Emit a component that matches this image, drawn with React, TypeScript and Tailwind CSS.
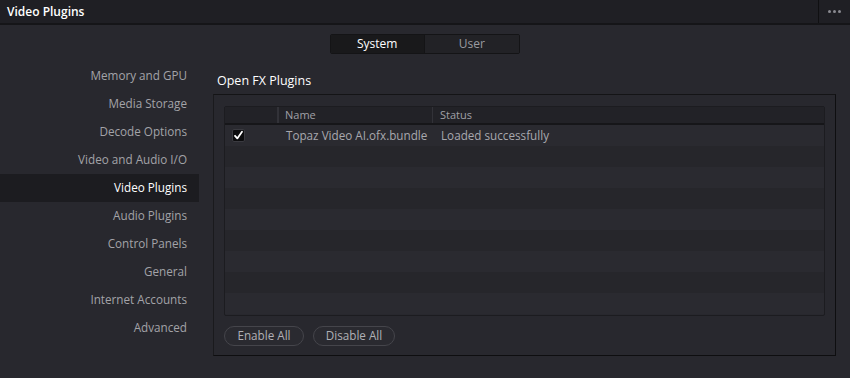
import React from 'react';

const sections = [
  'Memory and GPU',
  'Media Storage',
  'Decode Options',
  'Video and Audio I/O',
  'Video Plugins',
  'Audio Plugins',
  'Control Panels',
  'General',
  'Internet Accounts',
  'Advanced',
];

const plugins = [{name: 'Topaz Video AI.ofx.bundle', status: 'Loaded successfully', enabled: true}];

const CheckBox: React.FC<{checked: boolean}> = ({checked}) => (
  <div className="w-[13px] h-[13px] bg-[#0c0c0e] border border-[#3a3a40] rounded-[2px] flex items-center justify-center">
    {checked && (
      <svg width="11" height="11" viewBox="0 0 11 11">
        <path d="M2 5.8 L4.3 8.4 L9 1.8" fill="none" stroke="#fff" strokeWidth="1.8" strokeLinecap="round" strokeLinejoin="round" />
      </svg>
    )}
  </div>
);

export default function App() {
  const emptyRows = Array.from({length: 8});
  return (
    <div className="w-[850px] h-[378px] bg-[#28282e] flex flex-col overflow-hidden" style={{fontFamily: '"Open Sans", "Noto Sans", sans-serif'}}>
      {/* title bar */}
      <div className="h-[25px] flex-shrink-0 bg-[#1f1f24] border-b-2 border-[#151518] flex items-stretch">
        <div className="flex-1 flex items-center pl-[7px] text-[12px] font-semibold text-white">Video Plugins</div>
        <div className="w-[32px] border-l border-[#101012] flex items-center justify-center gap-[2px]">
          <span className="w-[3px] h-[3px] rounded-full bg-[#8a8a90]" />
          <span className="w-[3px] h-[3px] rounded-full bg-[#8a8a90]" />
          <span className="w-[3px] h-[3px] rounded-full bg-[#8a8a90]" />
        </div>
      </div>

      {/* tabs */}
      <div className="flex justify-center pt-[9px] pr-[1px]">
        <div className="flex w-[190px] h-[20px] border border-[#141416] rounded-[2px] overflow-hidden text-[12px]">
          <div className="flex-1 bg-[#19191b] text-white flex items-center justify-center">System</div>
          <div className="flex-1 bg-[#222226] text-[#9a9aa0] flex items-center justify-center border-l border-[#141416]">User</div>
        </div>
      </div>

      <div className="flex flex-1 pt-[8px]">
        {/* sidebar */}
        <div className="w-[199px] flex flex-col">
          {sections.map((s) => (
            <div
              key={s}
              className={`h-[28px] flex items-center justify-end pr-[12px] text-[11.7px] ${
                s === 'Video Plugins' ? 'bg-[#1c1c20] text-white' : 'text-[#a3a3a8]'
              }`}>
              {s}
            </div>
          ))}
        </div>

        {/* main */}
        <div className="flex-1 pl-[14px] pt-[7px] flex flex-col">
          <div className="h-[25px] flex items-center pl-[4px] text-[12.5px] text-white">Open FX Plugins</div>
          <div className="w-[623px] h-[262px] border border-[#0e0e10] border-l-[#1a1a1d] border-t-[#141416] bg-[#28282e] px-[10px] pt-[11px] flex flex-col">
            <div className="h-[210px] bg-[#28282e] border border-[#1c1c20] rounded-[2px] flex flex-col overflow-hidden">
              <div className="h-[18px] flex-shrink-0 bg-[#222227] border-b-2 border-[#161619] flex text-[11px] text-[#a0a0a6]">
                <div className="w-[54px] border-r-2 border-[#323238]" />
                <div className="w-[154px] border-r border-[#323238] pl-[6px] flex items-center">Name</div>
                <div className="flex-1 pl-[7px] flex items-center">Status</div>
              </div>
              {plugins.map((p) => (
                <div key={p.name} className="h-[21px] flex-shrink-0 bg-[#2a2a30] flex items-center text-[11.7px] text-[#a8a8ae]">
                  <div className="w-[54px] pl-[7px] flex items-center">
                    <CheckBox checked={p.enabled} />
                  </div>
                  <div className="w-[155px] pl-[7px] whitespace-nowrap">{p.name}</div>
                  <div className="flex-1 pl-[7px]">{p.status}</div>
                </div>
              ))}
              {emptyRows.map((_, i) => (
                <div key={i} className={`h-[21px] flex-shrink-0 ${i % 2 === 0 ? 'bg-[#26262b]' : 'bg-[#2a2a30]'}`} />
              ))}
            </div>
            <div className="flex gap-[9px] mt-[10px]">
              <button className="h-[20px] w-[80px] rounded-full border border-[#45454b] bg-[#2a2a30] text-[11.7px] text-[#b0b0b6] flex items-center justify-center">
                Enable All
              </button>
              <button className="h-[20px] w-[82px] rounded-full border border-[#45454b] bg-[#2a2a30] text-[11.7px] text-[#b0b0b6] flex items-center justify-center">
                Disable All
              </button>
            </div>
          </div>
        </div>
      </div>
    </div>
  );
}
